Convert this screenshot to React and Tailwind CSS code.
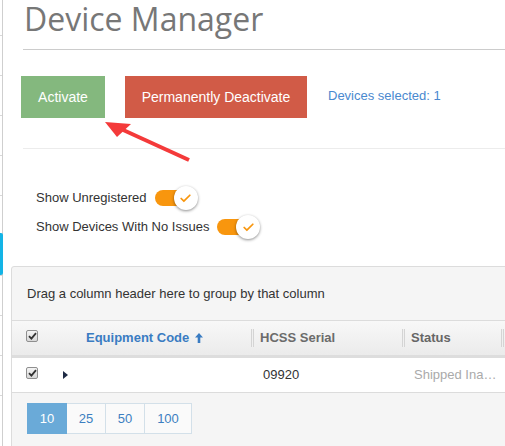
import { Check } from 'lucide-react';

const ticks = [0, 1, 2, 3, 4, 5, 6, 7, 8, 9];

function Toggle() {
  return (
    <div className="relative h-[24px] w-[43px] shrink-0">
      <div className="mt-[4px] h-[16px] w-[36px] rounded-full bg-[#f8960e]" />
      <div className="absolute right-0 top-0 flex h-[24px] w-[24px] items-center justify-center rounded-full bg-white shadow-[0_1px_3px_rgba(0,0,0,0.45)]">
        <Check className="h-[13px] w-[13px] text-[#f8960e]" strokeWidth={3.2} />
      </div>
    </div>
  );
}

function Checkbox() {
  return (
    <div className="flex h-[12px] w-[12px] items-center justify-center rounded-[2px] border border-[#8f8f8f] bg-gradient-to-b from-[#f4f4f4] to-[#d8d8d8]">
      <svg width="9" height="8" viewBox="0 0 9 8">
        <path d="M1 4.2 L3.4 6.6 L8 1.2" fill="none" stroke="#333" strokeWidth="1.8" />
      </svg>
    </div>
  );
}

function Separator() {
  return <div className="h-[18px] w-[3px] shrink-0 border-x border-[#d4d4d4] bg-[#f0f0f0]" />;
}

export default function App() {
  return (
    <div className="relative flex h-[446px] w-[505px] overflow-hidden bg-white font-['Liberation_Sans',Arial,sans-serif] text-[#333]">
      {/* left edge of the window behind */}
      <div className="relative flex w-[3px] shrink-0 flex-col gap-[39px] border-r border-[#cfcfcf] pt-[35px]">
        {ticks.map((t) => (
          <div key={t} className="h-px w-[2px] bg-[#d8d8d8]" />
        ))}
        <div className="absolute left-0 top-[233px] h-[42px] w-[3px] rounded-r-[2px] bg-[#13b4e6]" />
      </div>

      <div className="flex min-w-0 flex-1 flex-col pl-[8px]">
        <h1 className="ml-[13px] pt-[1px] font-['Open_Sans',sans-serif] text-[32px] leading-[35px] text-[#777]">
          Device Manager
        </h1>
        <div className="ml-[12px] mt-[13px] border-t border-[#cccccc]" />

        {/* actions */}
        <div className="ml-[10px] mt-[26px] flex items-center">
          <button type="button" className="h-[42px] w-[84px] bg-[#84b87e] text-[14px] text-white">
            Activate
          </button>
          <button type="button" className="ml-[20px] h-[42px] w-[182px] bg-[#d15b47] text-[14px] text-white">
            Permanently Deactivate
          </button>
          <span className="-mt-[2px] ml-[21px] text-[13px] text-[#4a89cf]">Devices selected: 1</span>
        </div>
        <div className="ml-[12px] mt-[30px] border-t border-[#ececec]" />

        {/* filters */}
        <div className="ml-[25px] mt-[37px] flex flex-col gap-[5px] text-[13px] text-[#333]">
          <div className="flex h-[24px] items-center gap-[8px]">
            <span>Show Unregistered</span>
            <Toggle />
          </div>
          <div className="flex h-[24px] items-center gap-[8px]">
            <span>Show Devices With No Issues</span>
            <Toggle />
          </div>
        </div>

        {/* grid */}
        <div className="mt-[27px] w-[520px] shrink-0 rounded-tl-[3px] border border-[#dcdcdc] bg-[#f5f5f5]">
          <div className="flex h-[54px] items-center border-b border-[#dcdcdc] pl-[15px] text-[13px] text-[#333]">
            Drag a column header here to group by that column
          </div>

          <div className="flex h-[37px] items-center border-b-[3px] border-[#dddddd] bg-gradient-to-b from-[#f8f8f8] to-[#ebebeb] text-[13px] font-bold">
            <div className="flex w-[40px] shrink-0 justify-center pb-[5px]">
              <Checkbox />
            </div>
            <div className="w-[24px] shrink-0" />
            <div className="flex w-[175px] shrink-0 items-center pl-[10px] text-[#3a7cc2]">
              Equipment Code
              <svg className="ml-[6px]" width="8" height="10" viewBox="0 0 8 10">
                <path d="M4 0 L8 4.5 L5.3 4.5 L5.3 10 L2.7 10 L2.7 4.5 L0 4.5 Z" fill="#3a7cc2" />
              </svg>
            </div>
            <Separator />
            <div className="w-[148px] shrink-0 pl-[6px] text-[#6b6b6b]">HCSS Serial</div>
            <Separator />
            <div className="w-[96px] shrink-0 pl-[6px] text-[#666]">Status</div>
            <Separator />
          </div>

          <div className="flex h-[35px] items-center border-b border-[#dcdcdc] bg-white text-[13px]">
            <div className="flex w-[40px] shrink-0 justify-center pb-[5px]">
              <Checkbox />
            </div>
            <div className="flex w-[24px] shrink-0 items-center pl-[11px]">
              <svg width="5" height="8" viewBox="0 0 5 8">
                <path d="M0 0 L5 4 L0 8 Z" fill="#1e2a44" />
              </svg>
            </div>
            <div className="w-[178px] shrink-0" />
            <div className="w-[151px] shrink-0 pl-[9px] text-[#333]">09920</div>
            <div className="w-[99px] shrink-0 pl-[9px] text-[#aaa]">Shipped Ina…</div>
          </div>

          <div className="flex h-[60px] pl-[15px] pt-[10px] text-[13px]">
            <div className="flex h-[31px] w-[40px] items-center justify-center bg-[#6aaad8] text-white">10</div>
            <div className="flex h-[31px] w-[39px] items-center justify-center border border-l-0 border-[#d3e0e9] bg-[#fafafa] text-[#3c7fc1]">25</div>
            <div className="flex h-[31px] w-[39px] items-center justify-center border border-l-0 border-[#d3e0e9] bg-[#fafafa] text-[#3c7fc1]">50</div>
            <div className="flex h-[31px] w-[47px] items-center justify-center border border-l-0 border-[#d3e0e9] bg-[#fafafa] text-[#3c7fc1]">100</div>
          </div>
        </div>
      </div>

      {/* annotation arrow */}
      <svg className="pointer-events-none absolute left-0 top-0" width="505" height="446" viewBox="0 0 505 446">
        <path d="M105 122 L131 124 L117 137 Z" fill="#f43a3a" />
        <line x1="121" y1="129" x2="189" y2="160" stroke="#f43a3a" strokeWidth="4" />
      </svg>
    </div>
  );
}
